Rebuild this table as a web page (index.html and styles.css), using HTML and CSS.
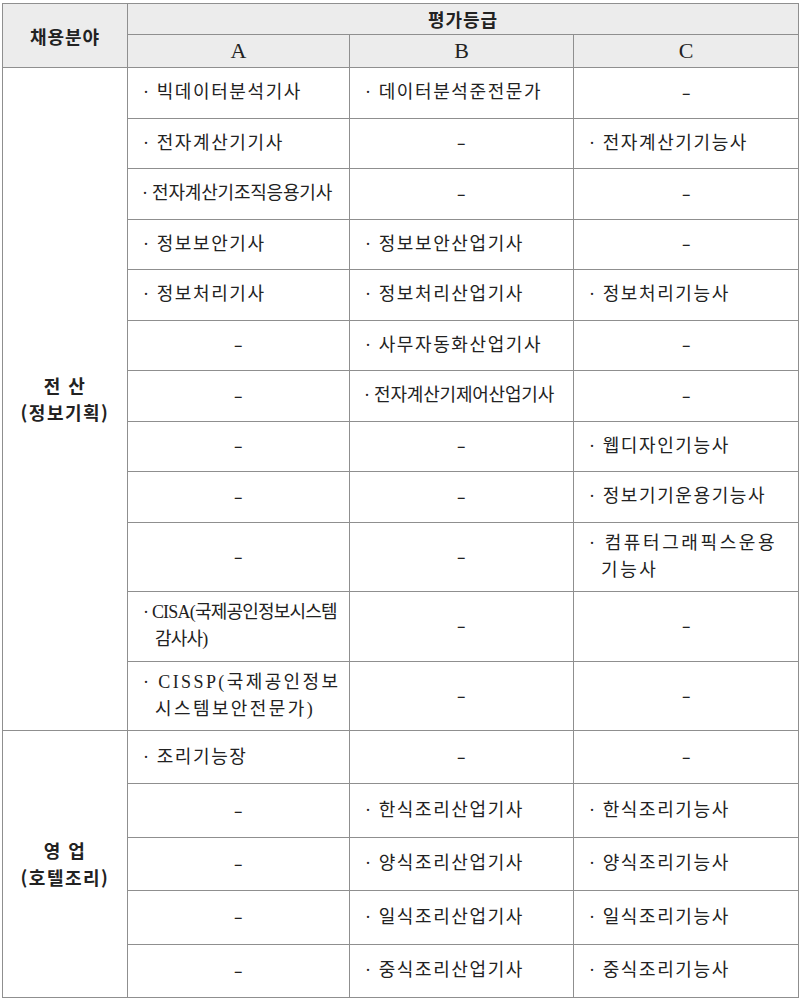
FILE: index.html
```html
<!DOCTYPE html>
<html lang="ko">
<head>
<meta charset="utf-8">
<title>채용분야 평가등급</title>
<link rel="stylesheet" href="styles.css">
</head>
<body>
<table class="grid">
  <colgroup>
    <col class="c0"><col class="c1"><col class="c2"><col class="c3">
  </colgroup>
  <thead>
    <tr class="h1">
      <th rowspan="2" class="hfield">채용분야</th>
      <th colspan="3" class="hgrade">평가등급</th>
    </tr>
    <tr class="h2">
      <th class="lat">A</th><th class="lat">B</th><th class="lat">C</th>
    </tr>
  </thead>
  <tbody>
    <tr class="r">
      <td rowspan="12" class="field">전 산<br>(정보기획)</td>
      <td class="it">· 빅데이터분석기사</td>
      <td class="it">· 데이터분석준전문가</td>
      <td class="dash"><span>-</span></td>
    </tr>
    <tr class="r">
      <td class="it">· 전자계산기기사</td>
      <td class="dash"><span>-</span></td>
      <td class="it">· 전자계산기기능사</td>
    </tr>
    <tr class="r">
      <td class="it tight">· 전자계산기조직응용기사</td>
      <td class="dash"><span>-</span></td>
      <td class="dash"><span>-</span></td>
    </tr>
    <tr class="r">
      <td class="it">· 정보보안기사</td>
      <td class="it">· 정보보안산업기사</td>
      <td class="dash"><span>-</span></td>
    </tr>
    <tr class="r">
      <td class="it">· 정보처리기사</td>
      <td class="it">· 정보처리산업기사</td>
      <td class="it">· 정보처리기능사</td>
    </tr>
    <tr class="r">
      <td class="dash"><span>-</span></td>
      <td class="it">· 사무자동화산업기사</td>
      <td class="dash"><span>-</span></td>
    </tr>
    <tr class="r">
      <td class="dash"><span>-</span></td>
      <td class="it tight">· 전자계산기제어산업기사</td>
      <td class="dash"><span>-</span></td>
    </tr>
    <tr class="r">
      <td class="dash"><span>-</span></td>
      <td class="dash"><span>-</span></td>
      <td class="it">· 웹디자인기능사</td>
    </tr>
    <tr class="r">
      <td class="dash"><span>-</span></td>
      <td class="dash"><span>-</span></td>
      <td class="it">· 정보기기운용기능사</td>
    </tr>
    <tr class="r2">
      <td class="dash"><span>-</span></td>
      <td class="dash"><span>-</span></td>
      <td class="it hang wide">· 컴퓨터그래픽스운용<br>기능사</td>
    </tr>
    <tr class="r2">
      <td class="it hang tight2">· CISA(국제공인정보시스템<br>감사사)</td>
      <td class="dash"><span>-</span></td>
      <td class="dash"><span>-</span></td>
    </tr>
    <tr class="r2">
      <td class="it hang wide2">· CISSP(국제공인정보<br>시스템보안전문가)</td>
      <td class="dash"><span>-</span></td>
      <td class="dash"><span>-</span></td>
    </tr>
    <tr class="r3">
      <td rowspan="5" class="field">영 업<br>(호텔조리)</td>
      <td class="it">· 조리기능장</td>
      <td class="dash"><span>-</span></td>
      <td class="dash"><span>-</span></td>
    </tr>
    <tr class="r3">
      <td class="dash"><span>-</span></td>
      <td class="it">· 한식조리산업기사</td>
      <td class="it">· 한식조리기능사</td>
    </tr>
    <tr class="r3">
      <td class="dash"><span>-</span></td>
      <td class="it">· 양식조리산업기사</td>
      <td class="it">· 양식조리기능사</td>
    </tr>
    <tr class="r3">
      <td class="dash"><span>-</span></td>
      <td class="it">· 일식조리산업기사</td>
      <td class="it">· 일식조리기능사</td>
    </tr>
    <tr class="r3">
      <td class="dash"><span>-</span></td>
      <td class="it">· 중식조리산업기사</td>
      <td class="it">· 중식조리기능사</td>
    </tr>
  </tbody>
</table>
</body>
</html>
```
FILE: styles.css
```css
html, body {
  margin: 0;
  padding: 0;
  background: #ffffff;
}
body {
  padding: 3px 2px 0 2px;
  font-family: "Liberation Serif", "Noto Sans CJK KR", serif;
  color: #222222;
}
.grid {
  border-collapse: collapse;
  table-layout: fixed;
  width: 796px;
  border: 1px solid #555555;
}
.c0 { width: 125px; }
.c1 { width: 222px; }
.c2 { width: 224px; }
.c3 { width: 225px; }
.grid th,
.grid td {
  border: 1px solid #8f8f8f;
  padding: 0;
}
.grid th {
  background: #ececec;
  text-align: center;
  vertical-align: middle;
}
.h1 th { height: 30px; }
.h2 th { height: 32px; }
.hfield,
.hgrade {
  font-family: "Noto Sans CJK KR", sans-serif;
  font-weight: 700;
  font-size: 18px;
  letter-spacing: 1px;
  line-height: 22px;
}
.lat {
  font-weight: 400;
  font-size: 22px;
  line-height: 24px;
}
.grid tbody tr:first-child td { border-top: 1px solid #666666; }
.field {
  font-family: "Noto Sans CJK KR", sans-serif;
  font-weight: 700;
  font-size: 18px;
  line-height: 27px;
  text-align: center;
  vertical-align: middle;
  letter-spacing: 1.5px;
}
.r td { height: 49.5px; }
.r2 td { height: 68.5px; }
.r3 td { height: 52.4px; }
.it {
  font-size: 18px;
  line-height: 27px;
  letter-spacing: 1.6px;
  padding-left: 15px !important;
  vertical-align: middle;
  white-space: nowrap;
}
.tight { letter-spacing: -0.2px; padding-left: 14px !important; }
.hang {
  padding-left: 27px !important;
  text-indent: -12px;
}
.wide { letter-spacing: 2.6px; }
.wide2 { letter-spacing: 2.4px; }
.tight2 { letter-spacing: -0.8px; }
.dash {
  text-align: center;
  vertical-align: middle;
  font-family: "Noto Sans CJK KR", sans-serif;
  font-size: 18px;
}
.dash span {
  display: inline-block;
  transform: scaleX(1.5);
}
```
